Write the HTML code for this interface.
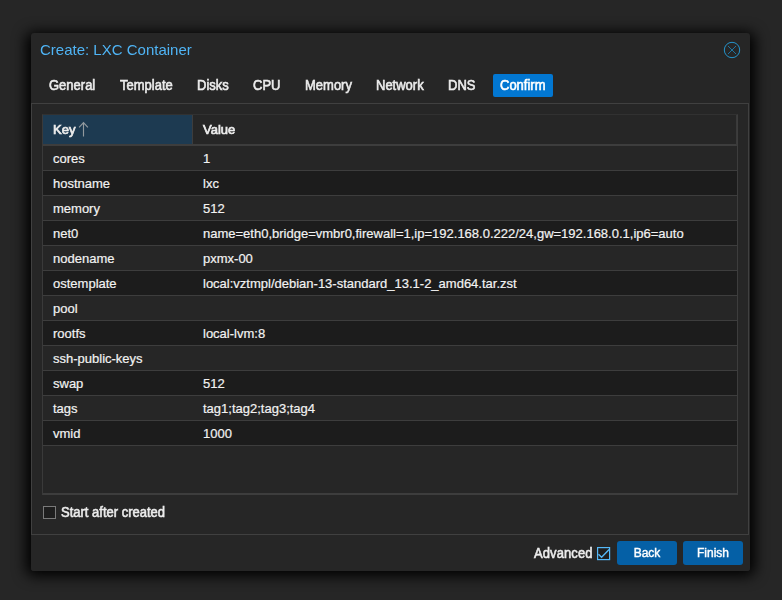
<!DOCTYPE html>
<html><head><meta charset="utf-8">
<style>
html,body{margin:0;padding:0;}
body{width:782px;height:600px;background:#262626;overflow:hidden;position:relative;font-family:"Liberation Sans",Helvetica,Arial,sans-serif;font-size:13px;color:#f2f2f2;}
.abs{position:absolute;}
.g{will-change:transform;}
#win{left:31px;top:33px;width:719px;height:538px;background:#262626;border-radius:3px;}
#shadow{left:31px;top:37px;width:719px;height:534px;border-radius:3px;box-shadow:0 0 14px 5px #000;}
#title{left:40px;top:41px;font-size:15px;color:#4fb4f5;line-height:18px;white-space:nowrap;}
.tab{transform:scaleY(1.06);transform-origin:0 15.5px;top:75px;height:22px;line-height:22px;font-size:13px;color:#ececec;white-space:nowrap;-webkit-text-stroke:0.55px #ececec;}
#tabact{left:493px;top:74px;width:60px;height:23px;background:#0277d2;border-radius:2px;}
#body{left:31px;top:103px;width:718px;height:432px;border:1px solid #404040;box-sizing:border-box;}
#grid{left:42px;top:114px;width:696px;height:381px;border:1px solid #3d3d3d;border-top-color:#313131;border-left-color:#3a3a3a;border-bottom-width:2px;box-sizing:border-box;background:#262626;}
#hdr{left:43px;top:115px;width:693px;height:29px;border-right:1px solid #3a3a3a;background:#262626;border-bottom:2px solid #3d3d3d;}
#hkey{left:43px;top:115px;width:149px;height:29px;background:#1d3a51;border-right:1px solid #3d3d3d;}
.ht{transform:scaleY(1.02);transform-origin:0 19px;top:115px;height:29px;line-height:29px;font-size:13px;color:#ececec;-webkit-text-stroke:0.7px #ececec;}
.row{left:43px;width:694px;height:24px;border-bottom:1px solid #3d3d3d;}
.row.alt{background:#1c1c1c;}
.c{position:absolute;top:1px;line-height:24px;height:24px;white-space:nowrap;font-size:13px;-webkit-text-stroke:0.2px #f2f2f2;}
.k{left:10px;}.v{left:160px;}
.btn{top:541px;height:24px;width:60px;background:#0560a6;border-radius:3px;color:#fff;text-align:center;line-height:24px;font-size:12px;-webkit-text-stroke:0.42px #fff;}
.lbl{transform:scaleY(1.06);transform-origin:0 13.5px;line-height:18px;font-size:13px;color:#ececec;-webkit-text-stroke:0.55px #ececec;white-space:nowrap;}
</style></head><body>
<div id="shadow" class="abs"></div>
<div id="win" class="abs"></div>
<div id="title" class="abs g">Create: LXC Container</div>
<svg class="abs" style="left:722px;top:40px" width="20" height="20" viewBox="0 0 20 20"><circle cx="10" cy="10" r="7.7" fill="none" stroke="#2594cb" stroke-width="1"/><path d="M6 6L14 14M14 6L6 14" stroke="#1d82b6" stroke-width="0.85" fill="none"/></svg>
<div id="tabact" class="abs"></div>
<div class="abs tab g" style="left:49px">General</div>
<div class="abs tab g" style="left:120px">Template</div>
<div class="abs tab g" style="left:197px">Disks</div>
<div class="abs tab g" style="left:253px">CPU</div>
<div class="abs tab g" style="left:305px">Memory</div>
<div class="abs tab g" style="left:376px">Network</div>
<div class="abs tab g" style="left:448px">DNS</div>
<div class="abs tab g" style="left:500px;color:#fff;-webkit-text-stroke-color:#fff">Confirm</div>
<div id="body" class="abs"></div>
<div id="grid" class="abs"></div>
<div id="hdr" class="abs"></div>
<div id="hkey" class="abs"></div>
<div class="abs ht g" style="left:53px">Key</div>
<svg class="abs" style="left:77px;top:120px" width="14" height="18" viewBox="0 0 14 18"><path d="M6.5 16.6V2.6M2.1 7.4L6.5 2.7L10.9 7.4" fill="none" stroke="#92999e" stroke-width="1.15"/></svg>
<div class="abs ht g" style="left:203px">Value</div>
<div class="abs row" style="top:146px"><span class="c k">cores</span><span class="c v">1</span></div>
<div class="abs row alt" style="top:171px"><span class="c k">hostname</span><span class="c v">lxc</span></div>
<div class="abs row" style="top:196px"><span class="c k">memory</span><span class="c v">512</span></div>
<div class="abs row alt" style="top:221px"><span class="c k">net0</span><span class="c v">name=eth0,bridge=vmbr0,firewall=1,ip=192.168.0.222/24,gw=192.168.0.1,ip6=auto</span></div>
<div class="abs row" style="top:246px"><span class="c k">nodename</span><span class="c v">pxmx-00</span></div>
<div class="abs row alt" style="top:271px"><span class="c k">ostemplate</span><span class="c v">local:vztmpl/debian-13-standard_13.1-2_amd64.tar.zst</span></div>
<div class="abs row" style="top:296px"><span class="c k">pool</span><span class="c v"></span></div>
<div class="abs row alt" style="top:321px"><span class="c k">rootfs</span><span class="c v">local-lvm:8</span></div>
<div class="abs row" style="top:346px"><span class="c k">ssh-public-keys</span><span class="c v"></span></div>
<div class="abs row alt" style="top:371px"><span class="c k">swap</span><span class="c v">512</span></div>
<div class="abs row" style="top:396px"><span class="c k">tags</span><span class="c v">tag1;tag2;tag3;tag4</span></div>
<div class="abs row alt" style="top:421px"><span class="c k">vmid</span><span class="c v">1000</span></div>
<div class="abs" style="left:43px;top:506px;width:11px;height:11px;border:1px solid #7a7a7a;background:#1e1e1e;"></div>
<div class="abs lbl g" style="left:61px;top:504px;">Start after created</div>
<div class="abs lbl g" style="left:534px;top:545px;letter-spacing:0.1px">Advanced</div>
<svg class="abs" style="left:595px;top:545px" width="18" height="18" viewBox="0 0 18 18"><rect x="2.6" y="2.6" width="12" height="12" fill="#1e1e1e" stroke="#55b8f7" stroke-width="1.2"/><path d="M3.5 9.2L6.6 12.2L14.1 4.6" fill="none" stroke="#55b8f7" stroke-width="1.4"/></svg>
<div class="abs btn g" style="left:617px">Back</div>
<div class="abs btn g" style="left:683px">Finish</div>
</body></html>
